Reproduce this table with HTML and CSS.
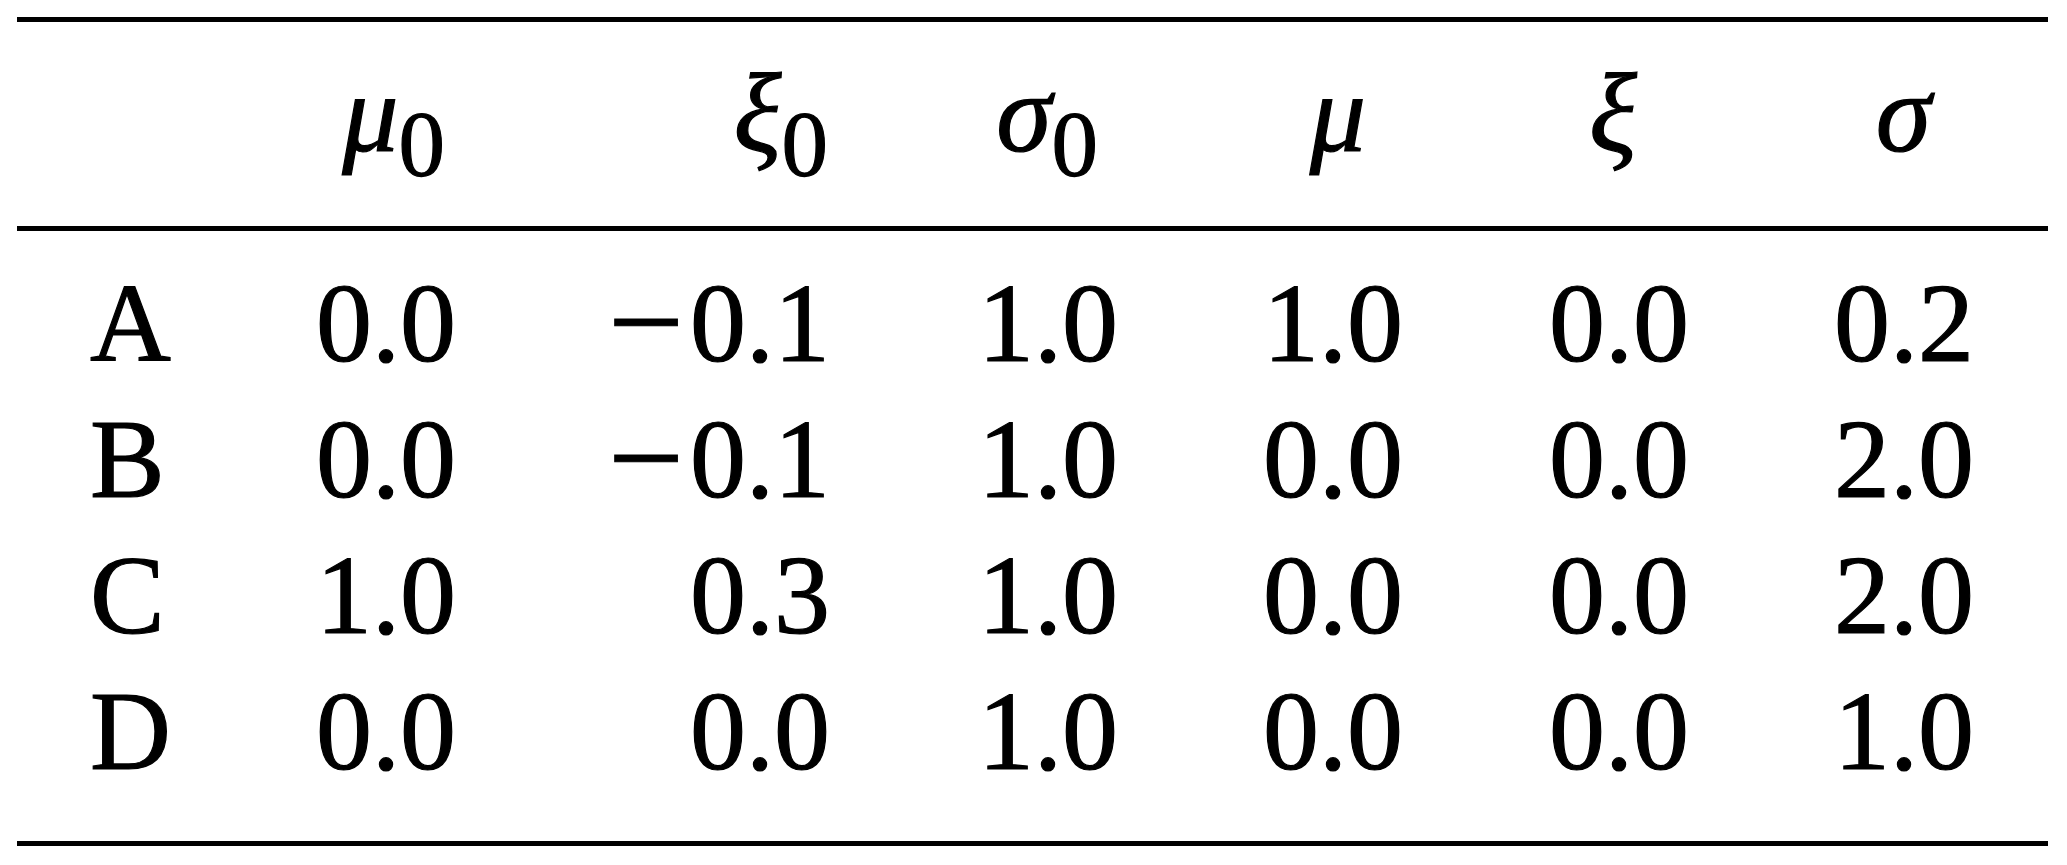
FILE: index.html
```html
<!DOCTYPE html>
<html lang="en">
<head>
<meta charset="utf-8">
<title>Parameter table</title>
<link rel="stylesheet" href="styles.css">
</head>
<body>
<div class="tbl">
  <div class="rule"></div>
  <div class="row head">
    <div class="cell label"></div>
    <div class="cell h1"><i class="gk">μ</i><span class="sub">0</span></div>
    <div class="cell h2"><i class="gk">ξ</i><span class="sub">0</span></div>
    <div class="cell h3"><i class="gk">σ</i><span class="sub">0</span></div>
    <div class="cell h4"><i class="gk">μ</i></div>
    <div class="cell h5"><i class="gk">ξ</i></div>
    <div class="cell h6"><i class="gk">σ</i></div>
  </div>
  <div class="rule"></div>
  <div class="body">
    <div class="row">
      <div class="cell label">A</div>
      <div class="cell">0.0</div>
      <div class="cell"><span class="minus">−</span>0.1</div>
      <div class="cell">1.0</div>
      <div class="cell">1.0</div>
      <div class="cell">0.0</div>
      <div class="cell">0.2</div>
    </div>
    <div class="row">
      <div class="cell label">B</div>
      <div class="cell">0.0</div>
      <div class="cell"><span class="minus">−</span>0.1</div>
      <div class="cell">1.0</div>
      <div class="cell">0.0</div>
      <div class="cell">0.0</div>
      <div class="cell">2.0</div>
    </div>
    <div class="row">
      <div class="cell label">C</div>
      <div class="cell">1.0</div>
      <div class="cell">0.3</div>
      <div class="cell">1.0</div>
      <div class="cell">0.0</div>
      <div class="cell">0.0</div>
      <div class="cell">2.0</div>
    </div>
    <div class="row">
      <div class="cell label">D</div>
      <div class="cell">0.0</div>
      <div class="cell">0.0</div>
      <div class="cell">1.0</div>
      <div class="cell">0.0</div>
      <div class="cell">0.0</div>
      <div class="cell">1.0</div>
    </div>
  </div>
  <div class="rule"></div>
</div>
</body>
</html>
```

FILE: styles.css
```css
html, body {
  margin: 0;
  padding: 0;
  background: #ffffff;
}

body {
  font-family: "Liberation Serif", "Times New Roman", serif;
  color: #000000;
}

.tbl {
  margin: 17px 0 0 17px;
  width: 2031px;
}

.rule {
  height: 5px;
  background: #000000;
}

.row {
  display: grid;
  grid-template-columns: 110px 256px 374px 288px 285px 286px 285px;
  padding-left: 73px;
  height: 136px;
  font-size: 112px;
  line-height: 136px;
  -webkit-text-stroke: 1.2px #000000;
}

.head {
  padding-top: 23px;
  padding-bottom: 45px;
}

.body {
  padding: 24px 0 42px;
}

.cell {
  text-align: right;
  white-space: nowrap;
}

.label {
  text-align: left;
}

.gk {
  font-style: italic;
}

.sub {
  font-size: 0.83em;
  line-height: 1;
  vertical-align: -24px;
}

.minus {
  font-size: 1.2em;
  line-height: 0;
  vertical-align: -6px;
  margin-right: 6px;
}

.h1 { padding-right: 11px; }
.h2 { padding-right: 2px; }
.h3 { padding-right: 20px; }
.h4 { padding-right: 37px; }
.h5 { padding-right: 52px; }
.h6 { padding-right: 43px; }
```
